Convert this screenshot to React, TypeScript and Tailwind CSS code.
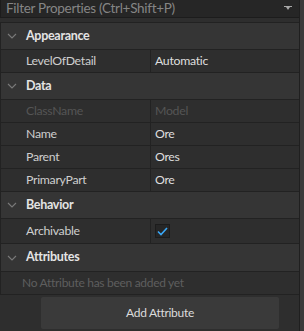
import React from "react";

type Prop = { name: string; value?: string; disabled?: boolean; check?: boolean };
type Section = { title: string; props: Prop[] };

const sections: Section[] = [
    { title: "Appearance", props: [{ name: "LevelOfDetail", value: "Automatic" }] },
    {
        title: "Data",
        props: [
            { name: "ClassName", value: "Model", disabled: true },
            { name: "Name", value: "Ore" },
            { name: "Parent", value: "Ores" },
            { name: "PrimaryPart", value: "Ore" },
        ],
    },
    { title: "Behavior", props: [{ name: "Archivable", check: true }] },
];

const Chevron = () => (
    <svg width="10" height="6" viewBox="0 0 10 6" className="ml-[6px] mr-[9px]">
        <path d="M1 1 L5 5 L9 1" fill="none" stroke="#7a7a7a" strokeWidth="1.1" />
    </svg>
);

const Header = ({ title, tall }: { title: string; tall?: boolean }) => (
    <div
        className={`flex items-center border-b border-[#222222] bg-[#353535] ${tall ? "h-[28px]" : "h-[27px]"}`}
    >
        <Chevron />
        <span className="text-[12.5px] font-bold tracking-[-0.3px] text-[#e4e4e4]">{title}</span>
    </div>
);

const Row = ({ p }: { p: Prop }) => (
    <div className={`flex border-b border-[#222222] ${p.check ? "h-[25px]" : "h-[23px]"}`}>
        <div
            className={`w-[150px] shrink-0 border-r border-[#222222] pl-[25px] flex items-center ${p.disabled ? "text-[#555555]" : "text-[#cfcfcf]"}`}
        >
            {p.name}
        </div>
        <div
            className={`flex-1 pl-[4px] flex items-center ${p.disabled ? "text-[#555555]" : "text-[#dedede]"}`}
        >
            {p.check ? (
                <div className="w-[15px] h-[14px] bg-[#262626] border border-[#1c1c1c] flex items-center justify-center">
                    <svg width="11" height="9" viewBox="0 0 11 9">
                        <path d="M1 4.5 L4 7.5 L10 1" fill="none" stroke="#3aa8f7" strokeWidth="1.6" />
                    </svg>
                </div>
            ) : (
                p.value
            )}
        </div>
    </div>
);

export default function App() {
    return (
        <div
            className="w-[304px] h-[331px] overflow-hidden flex bg-[#2e2e2e] text-[12.3px] tracking-[-0.3px]"
            style={{ fontFamily: "Lato, 'Open Sans', sans-serif" }}
        >
            <div className="w-[300px] shrink-0 flex flex-col border-r border-[#1f1f1f]">
                <div className="h-[18px] flex items-center justify-between bg-[#262626] border-b border-[#1c1c1c] border-l pl-[5px] pr-[7px]">
                    <span className="text-[13.5px] text-[#858585] leading-none">
                        Filter Properties (Ctrl+Shift+P)
                    </span>
                    <svg width="8" height="5" viewBox="0 0 8 5">
                        <path d="M0 0 H8 V1 H6 L4 4 L2 1 H0 Z" fill="#a8a8a8" />
                    </svg>
                </div>
                <div className="h-[4px]" />
                <div className="border-t border-l border-[#222222]">
                    {sections.map((s) => (
                        <div key={s.title}>
                            <Header title={s.title} />
                            {s.props.map((p) => (
                                <Row key={p.name} p={p} />
                            ))}
                        </div>
                    ))}
                    <Header title="Attributes" tall />
                    <div className="h-[23px] border-b border-[#222222] pl-[21px] flex items-center text-[#5e5e5e] text-[12px]">
                        No Attribute has been added yet
                    </div>
                </div>
                <div className="pt-[2px] pl-[41px]">
                    <button className="w-[238px] h-[32px] rounded-[2px] bg-[#3a3a3a] text-[#dcdcdc] text-[12px] tracking-[-0.3px]">
                        Add Attribute
                    </button>
                </div>
            </div>
            <div className="w-[4px] bg-[#3a3a3a]" />
        </div>
    );
}
